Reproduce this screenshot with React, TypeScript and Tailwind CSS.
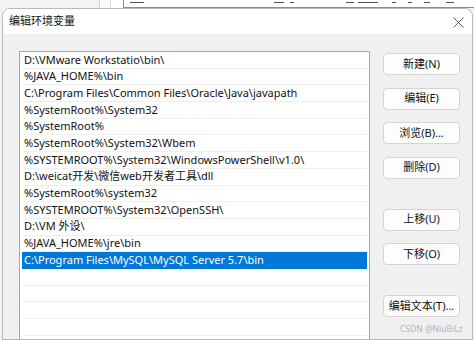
import React from "react";

const rows = [
  "D:\\VMware Workstatio\\bin\\",
  "%JAVA_HOME%\\bin",
  "C:\\Program Files\\Common Files\\Oracle\\Java\\javapath",
  "%SystemRoot%\\System32",
  "%SystemRoot%",
  "%SystemRoot%\\System32\\Wbem",
  "%SYSTEMROOT%\\System32\\WindowsPowerShell\\v1.0\\",
  "D:\\weicat开发\\微信web开发者工具\\dll",
  "%SystemRoot%\\system32",
  "%SYSTEMROOT%\\System32\\OpenSSH\\",
  "D:\\VM 外设\\",
  "%JAVA_HOME%\\jre\\bin",
  "C:\\Program Files\\MySQL\\MySQL Server 5.7\\bin",
  "",
  "",
  "",
  "",
  "",
];

const font = { fontFamily: '"Noto Sans", "Noto Sans CJK SC", sans-serif' };

function Btn({ label, className = "" }: { label: string; className?: string }) {
  return (
    <div
      className={
        "h-[22px] w-[77px] flex items-center justify-center rounded-[4px] border border-[#d3d3d3] bg-[#fdfdfd] text-[11px] text-[#111] " +
        className
      }
    >
      {label}
    </div>
  );
}

const marks = [
  [6, 14], [150, 10], [166, 4], [222, 8], [234, 20], [268, 4], [284, 4], [300, 6], [322, 8],
];

export default function App() {
  return (
    <div className="w-[474px] h-[340px] overflow-hidden bg-[#f3f3f3] flex flex-col" style={font}>
      {/* background window strip */}
      <div className="h-[8px] shrink-0 flex overflow-hidden">
        <div className="w-[100px] bg-[#f3f3f3] border-r border-[#d6d6d6]" />
        <div className="w-[11px] bg-[#fafafa] border-r border-[#dcdcdc]" />
        <div className="flex-1 bg-white pl-[12px]">
          <div className="h-[8px] border-l border-b border-[#8c8c8c] relative">
            {marks.map(([x, w], i) => (
              <div
                key={i}
                className="absolute top-0 h-[3px] border-b border-[#555]"
                style={{ left: x, width: w }}
              />
            ))}
          </div>
        </div>
      </div>
      {/* dialog */}
      <div className="ml-[2px] w-[471px] flex-1 rounded-t-[8px] border border-[#b9b9b9] bg-[#f0f0f0] flex flex-col overflow-hidden">
        <div className="h-[25px] shrink-0 bg-white flex items-center justify-between pl-[6px] pr-[8px]">
          <span className="text-[11px] text-[#111]">编辑环境变量</span>
          <svg width="11" height="11" viewBox="0 0 11 11" className="mt-[1px]">
            <path d="M0.5 0.5 L10.5 10.5 M10.5 0.5 L0.5 10.5" stroke="#444" strokeWidth="0.9" />
          </svg>
        </div>
        <div className="flex-1 flex pl-[16px] pt-[17px]">
          <div className="w-[351px] h-[400px] border border-[#a6a6a6] bg-white px-[2px]">
            {rows.map((r, i) => (
              <div
                key={i}
                className={
                  "h-[16.7px] border-b flex items-center pl-[2px] text-[11px] whitespace-nowrap overflow-hidden " +
                  (i === 12
                    ? "bg-[#0078d7] text-white border-[#0078d7]"
                    : "text-[#111] border-[#efefef]")
                }
              >
                {r}
              </div>
            ))}
          </div>
          <div className="ml-[13px] flex flex-col pt-[2px]">
            <Btn label="新建(N)" />
            <Btn label="编辑(E)" className="mt-[12.5px]" />
            <Btn label="浏览(B)..." className="mt-[12.5px]" />
            <Btn label="删除(D)" className="mt-[12.5px]" />
            <Btn label="上移(U)" className="mt-[30px]" />
            <Btn label="下移(O)" className="mt-[12.5px]" />
            <Btn label="编辑文本(T)..." className="mt-[30px]" />
            <div className="mt-[6px] pl-[17px] whitespace-nowrap text-[8.5px] text-[#b4b4b4]">CSDN @NiuBiLz</div>
          </div>
        </div>
      </div>
    </div>
  );
}
